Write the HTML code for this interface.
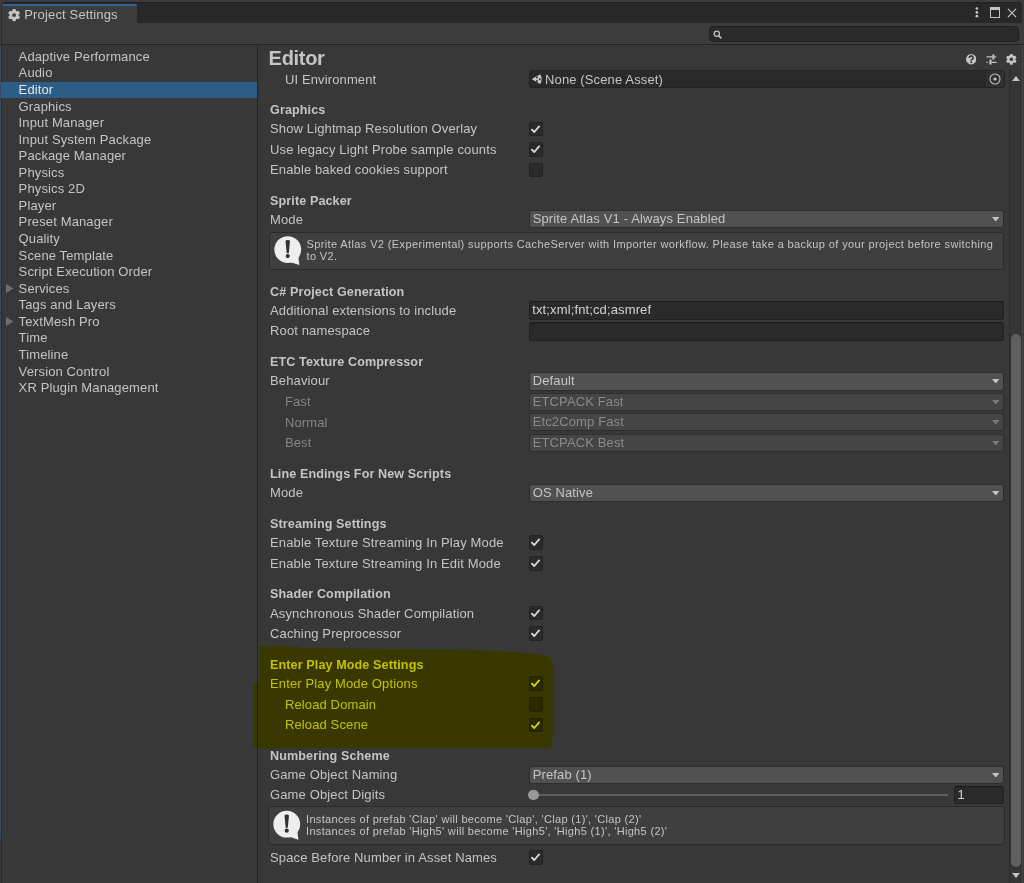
<!DOCTYPE html>
<html><head><meta charset="utf-8"><style>
html,body{margin:0;padding:0;}
body{width:1024px;height:883px;overflow:hidden;position:relative;background:#383838;font-family:"Liberation Sans", sans-serif;}
.t{position:absolute;white-space:nowrap;}
</style></head><body>
<div style="position:absolute;left:0px;top:0px;width:1024.00px;height:45.00px;background:#3b3b3b"></div><div style="position:absolute;left:1.2px;top:2px;width:1020.50px;height:20.70px;background:#282828;border-top:1px solid #1f1f1f;border-radius:5px 4px 0 0;box-sizing:border-box"></div><div style="position:absolute;left:1.5px;top:3.7px;width:135.00px;height:26.30px;background:#3c3c3c;border-radius:4px 3px 0 0"></div><div style="position:absolute;left:1.5px;top:3.7px;width:135.30px;height:2.70px;background:#2f6396;border-radius:4px 3px 0 0"></div><div style="position:absolute;left:1.2px;top:22.7px;width:1020.80px;height:21.30px;background:#3c3c3c"></div><div style="position:absolute;left:0.9px;top:5px;width:0.70px;height:40.00px;background:#2c2c2c"></div><div style="position:absolute;left:0px;top:44px;width:1024.00px;height:1.00px;background:#232323"></div><svg style="position:absolute;left:6.85px;top:7.90px" width="14.2" height="14.2" viewBox="0 0 14.2 14.2"><rect x="5.400" y="1.000" width="3.4" height="6.1" rx="1.020" transform="rotate(0 7.1 7.1)" fill="#c4c4c4"/><rect x="5.400" y="1.000" width="3.4" height="6.1" rx="1.020" transform="rotate(60 7.1 7.1)" fill="#c4c4c4"/><rect x="5.400" y="1.000" width="3.4" height="6.1" rx="1.020" transform="rotate(120 7.1 7.1)" fill="#c4c4c4"/><rect x="5.400" y="1.000" width="3.4" height="6.1" rx="1.020" transform="rotate(180 7.1 7.1)" fill="#c4c4c4"/><rect x="5.400" y="1.000" width="3.4" height="6.1" rx="1.020" transform="rotate(240 7.1 7.1)" fill="#c4c4c4"/><rect x="5.400" y="1.000" width="3.4" height="6.1" rx="1.020" transform="rotate(300 7.1 7.1)" fill="#c4c4c4"/><circle cx="7.1" cy="7.1" r="4.6" fill="#c4c4c4"/><circle cx="7.1" cy="7.1" r="1.95" fill="#3c3c3c"/></svg><div class="t" style="left:24.3px;top:6.83px;font-size:13px;line-height:16px;font-weight:normal;color:#c4c4c4;letter-spacing:0.15px;">Project Settings</div><svg style="position:absolute;left:974px;top:5px" width="6" height="15" viewBox="0 0 6 15"><circle cx="2.9" cy="3.5" r="1.35" fill="#c4c4c4"/><circle cx="2.9" cy="7.4" r="1.35" fill="#c4c4c4"/><circle cx="2.9" cy="11.2" r="1.35" fill="#c4c4c4"/></svg><div style="position:absolute;left:990px;top:7px;width:10.20px;height:10.70px;border:1px solid #c4c4c4;border-top:3px solid #c4c4c4;box-sizing:border-box"></div><svg style="position:absolute;left:1006.5px;top:7.5px" width="10" height="10" viewBox="0 0 10 10"><path d="M0.9 0.9L9.1 9.1M9.1 0.9L0.9 9.1" stroke="#c4c4c4" stroke-width="1.15"/></svg><div style="position:absolute;left:709.1px;top:25.5px;width:309.50px;height:16.20px;background:#2a2a2a;border:1px solid #202020;border-radius:4px;box-sizing:border-box"></div><svg style="position:absolute;left:713px;top:29.5px" width="10" height="10" viewBox="0 0 10 10"><circle cx="3.8" cy="3.8" r="2.6" fill="none" stroke="#c4c4c4" stroke-width="1.25"/><path d="M5.6 5.6L8.4 8.4" stroke="#c4c4c4" stroke-width="1.5"/></svg><div style="position:absolute;left:0px;top:45px;width:1.00px;height:794.00px;background:#3b4a5f"></div><div style="position:absolute;left:1px;top:45px;width:0.80px;height:838.00px;background:#2a2a2a"></div><div class="t" style="left:18.6px;top:48.83px;font-size:13px;line-height:16px;font-weight:normal;color:#c4c4c4;letter-spacing:0.13px;">Adaptive Performance</div><div class="t" style="left:18.6px;top:65.40px;font-size:13px;line-height:16px;font-weight:normal;color:#c4c4c4;letter-spacing:0.13px;">Audio</div><div style="position:absolute;left:1.2px;top:82px;width:256.30px;height:16.40px;background:#2c5d87"></div><div class="t" style="left:18.6px;top:81.96px;font-size:13px;line-height:16px;font-weight:normal;color:#e6e6e6;letter-spacing:0.13px;">Editor</div><div class="t" style="left:18.6px;top:98.53px;font-size:13px;line-height:16px;font-weight:normal;color:#c4c4c4;letter-spacing:0.13px;">Graphics</div><div class="t" style="left:18.6px;top:115.09px;font-size:13px;line-height:16px;font-weight:normal;color:#c4c4c4;letter-spacing:0.13px;">Input Manager</div><div class="t" style="left:18.6px;top:131.66px;font-size:13px;line-height:16px;font-weight:normal;color:#c4c4c4;letter-spacing:0.13px;">Input System Package</div><div class="t" style="left:18.6px;top:148.22px;font-size:13px;line-height:16px;font-weight:normal;color:#c4c4c4;letter-spacing:0.13px;">Package Manager</div><div class="t" style="left:18.6px;top:164.79px;font-size:13px;line-height:16px;font-weight:normal;color:#c4c4c4;letter-spacing:0.13px;">Physics</div><div class="t" style="left:18.6px;top:181.35px;font-size:13px;line-height:16px;font-weight:normal;color:#c4c4c4;letter-spacing:0.13px;">Physics 2D</div><div class="t" style="left:18.6px;top:197.92px;font-size:13px;line-height:16px;font-weight:normal;color:#c4c4c4;letter-spacing:0.13px;">Player</div><div class="t" style="left:18.6px;top:214.48px;font-size:13px;line-height:16px;font-weight:normal;color:#c4c4c4;letter-spacing:0.13px;">Preset Manager</div><div class="t" style="left:18.6px;top:231.05px;font-size:13px;line-height:16px;font-weight:normal;color:#c4c4c4;letter-spacing:0.13px;">Quality</div><div class="t" style="left:18.6px;top:247.61px;font-size:13px;line-height:16px;font-weight:normal;color:#c4c4c4;letter-spacing:0.13px;">Scene Template</div><div class="t" style="left:18.6px;top:264.18px;font-size:13px;line-height:16px;font-weight:normal;color:#c4c4c4;letter-spacing:0.13px;">Script Execution Order</div><svg style="position:absolute;left:5.8px;top:284.31px" width="8" height="9" viewBox="0 0 8 9"><path d="M0 0L7.5 4.5L0 9z" fill="#6e6e6e"/></svg><div class="t" style="left:18.6px;top:280.74px;font-size:13px;line-height:16px;font-weight:normal;color:#c4c4c4;letter-spacing:0.13px;">Services</div><div class="t" style="left:18.6px;top:297.31px;font-size:13px;line-height:16px;font-weight:normal;color:#c4c4c4;letter-spacing:0.13px;">Tags and Layers</div><svg style="position:absolute;left:5.8px;top:317.44px" width="8" height="9" viewBox="0 0 8 9"><path d="M0 0L7.5 4.5L0 9z" fill="#6e6e6e"/></svg><div class="t" style="left:18.6px;top:313.87px;font-size:13px;line-height:16px;font-weight:normal;color:#c4c4c4;letter-spacing:0.13px;">TextMesh Pro</div><div class="t" style="left:18.6px;top:330.44px;font-size:13px;line-height:16px;font-weight:normal;color:#c4c4c4;letter-spacing:0.13px;">Time</div><div class="t" style="left:18.6px;top:347.00px;font-size:13px;line-height:16px;font-weight:normal;color:#c4c4c4;letter-spacing:0.13px;">Timeline</div><div class="t" style="left:18.6px;top:363.57px;font-size:13px;line-height:16px;font-weight:normal;color:#c4c4c4;letter-spacing:0.13px;">Version Control</div><div class="t" style="left:18.6px;top:380.13px;font-size:13px;line-height:16px;font-weight:normal;color:#c4c4c4;letter-spacing:0.13px;">XR Plugin Management</div><div style="position:absolute;left:257.3px;top:45px;width:1.10px;height:838.00px;background:#232323"></div><div class="t" style="left:268.6px;top:45.96px;font-size:20px;line-height:24px;font-weight:bold;color:#c4c4c4;letter-spacing:-0.3px;">Editor</div><svg style="position:absolute;left:966px;top:54.4px" width="10.4" height="10.4" viewBox="0 0 10 10"><circle cx="5" cy="5" r="5" fill="#c4c4c4"/><path d="M3.2 3.8a1.8 1.8 0 1 1 2.7 1.4c-0.6 0.4-0.9 0.6-0.9 1.2" fill="none" stroke="#383838" stroke-width="1.6"/><circle cx="5" cy="7.95" r="0.95" fill="#383838"/></svg><svg style="position:absolute;left:985.5px;top:54px" width="11" height="11" viewBox="0 0 11 11"><path d="M0.5 2.8H6.3M8.5 2.8H10.2M0.5 8.3H1.9M5.6 8.3H10.5" stroke="#c4c4c4" stroke-width="1.3"/><rect x="6.3" y="0.5" width="2.2" height="4.9" rx="0.4" fill="#c4c4c4"/><rect x="3.4" y="5.6" width="2.2" height="5.0" rx="0.4" fill="#c4c4c4"/></svg><svg style="position:absolute;left:1004.50px;top:53.20px" width="12.7" height="12.7" viewBox="0 0 12.7 12.7"><rect x="4.850" y="1.000" width="3.0" height="5.35" rx="0.900" transform="rotate(0 6.35 6.35)" fill="#c4c4c4"/><rect x="4.850" y="1.000" width="3.0" height="5.35" rx="0.900" transform="rotate(60 6.35 6.35)" fill="#c4c4c4"/><rect x="4.850" y="1.000" width="3.0" height="5.35" rx="0.900" transform="rotate(120 6.35 6.35)" fill="#c4c4c4"/><rect x="4.850" y="1.000" width="3.0" height="5.35" rx="0.900" transform="rotate(180 6.35 6.35)" fill="#c4c4c4"/><rect x="4.850" y="1.000" width="3.0" height="5.35" rx="0.900" transform="rotate(240 6.35 6.35)" fill="#c4c4c4"/><rect x="4.850" y="1.000" width="3.0" height="5.35" rx="0.900" transform="rotate(300 6.35 6.35)" fill="#c4c4c4"/><circle cx="6.35" cy="6.35" r="4.0" fill="#c4c4c4"/><circle cx="6.35" cy="6.35" r="1.75" fill="#383838"/></svg><div class="t" style="left:284.9px;top:71.58px;font-size:13px;line-height:16px;font-weight:normal;color:#c4c4c4;letter-spacing:0.13px;">UI Environment</div><div style="position:absolute;left:528.7px;top:70px;width:476.10px;height:18.00px;background:#2a2a2a;border:1px solid #232323;border-radius:3px;box-sizing:border-box"></div><div style="position:absolute;left:986px;top:71px;width:17.80px;height:16.00px;background:#303030;border-radius:0 3px 3px 0"></div><svg style="position:absolute;left:532.4px;top:74.2px" width="10" height="10.4" viewBox="0 0 10 10.4"><path d="M0.3 5.2Q0.3 4.9 0.7 4.6L8.2 0.3Q9.6 2.6 9.6 5.2Q9.6 7.8 8.2 10.1L0.7 5.8Q0.3 5.5 0.3 5.2z" fill="#c8c8c8"/><circle cx="4.9" cy="3.4" r="0.95" fill="#2a2a2a"/><circle cx="4.9" cy="7.0" r="0.95" fill="#2a2a2a"/><circle cx="7.7" cy="5.2" r="0.95" fill="#2a2a2a"/></svg><div class="t" style="left:545px;top:71.53px;font-size:13px;line-height:16px;font-weight:normal;color:#c4c4c4;letter-spacing:0.13px;">None (Scene Asset)</div><svg style="position:absolute;left:989.3px;top:73px" width="12" height="12" viewBox="0 0 12 12"><circle cx="6" cy="6" r="5" fill="none" stroke="#c4c4c4" stroke-width="1.1"/><circle cx="6" cy="6" r="1.6" fill="#c4c4c4"/></svg><div class="t" style="left:270px;top:102.08px;font-size:12.6px;line-height:16px;font-weight:bold;color:#c4c4c4;letter-spacing:0.1px;">Graphics</div><div class="t" style="left:270px;top:192.68px;font-size:12.6px;line-height:16px;font-weight:bold;color:#c4c4c4;letter-spacing:0.1px;">Sprite Packer</div><div class="t" style="left:270px;top:283.63px;font-size:12.6px;line-height:16px;font-weight:bold;color:#c4c4c4;letter-spacing:0.1px;">C# Project Generation</div><div class="t" style="left:270px;top:354.38px;font-size:12.6px;line-height:16px;font-weight:bold;color:#c4c4c4;letter-spacing:0.1px;">ETC Texture Compressor</div><div class="t" style="left:270px;top:466.13px;font-size:12.6px;line-height:16px;font-weight:bold;color:#c4c4c4;letter-spacing:0.1px;">Line Endings For New Scripts</div><div class="t" style="left:270px;top:515.98px;font-size:12.6px;line-height:16px;font-weight:bold;color:#c4c4c4;letter-spacing:0.1px;">Streaming Settings</div><div class="t" style="left:270px;top:586.48px;font-size:12.6px;line-height:16px;font-weight:bold;color:#c4c4c4;letter-spacing:0.1px;">Shader Compilation</div><div class="t" style="left:270px;top:748.08px;font-size:12.6px;line-height:16px;font-weight:bold;color:#c4c4c4;letter-spacing:0.1px;">Numbering Scheme</div><div class="t" style="left:270px;top:121.18px;font-size:13px;line-height:16px;font-weight:normal;color:#c4c4c4;letter-spacing:0.13px;">Show Lightmap Resolution Overlay</div><div class="t" style="left:270px;top:141.68px;font-size:13px;line-height:16px;font-weight:normal;color:#c4c4c4;letter-spacing:0.13px;">Use legacy Light Probe sample counts</div><div class="t" style="left:270px;top:162.18px;font-size:13px;line-height:16px;font-weight:normal;color:#c4c4c4;letter-spacing:0.13px;">Enable baked cookies support</div><div class="t" style="left:270px;top:211.78px;font-size:13px;line-height:16px;font-weight:normal;color:#c4c4c4;letter-spacing:0.13px;">Mode</div><div class="t" style="left:270px;top:302.73px;font-size:13px;line-height:16px;font-weight:normal;color:#c4c4c4;letter-spacing:0.13px;">Additional extensions to include</div><div class="t" style="left:270px;top:323.48px;font-size:13px;line-height:16px;font-weight:normal;color:#c4c4c4;letter-spacing:0.13px;">Root namespace</div><div class="t" style="left:270px;top:373.48px;font-size:13px;line-height:16px;font-weight:normal;color:#c4c4c4;letter-spacing:0.13px;">Behaviour</div><div class="t" style="left:270px;top:485.23px;font-size:13px;line-height:16px;font-weight:normal;color:#c4c4c4;letter-spacing:0.13px;">Mode</div><div class="t" style="left:270px;top:535.08px;font-size:13px;line-height:16px;font-weight:normal;color:#c4c4c4;letter-spacing:0.13px;">Enable Texture Streaming In Play Mode</div><div class="t" style="left:270px;top:555.98px;font-size:13px;line-height:16px;font-weight:normal;color:#c4c4c4;letter-spacing:0.13px;">Enable Texture Streaming In Edit Mode</div><div class="t" style="left:270px;top:605.58px;font-size:13px;line-height:16px;font-weight:normal;color:#c4c4c4;letter-spacing:0.13px;">Asynchronous Shader Compilation</div><div class="t" style="left:270px;top:625.93px;font-size:13px;line-height:16px;font-weight:normal;color:#c4c4c4;letter-spacing:0.13px;">Caching Preprocessor</div><div class="t" style="left:270px;top:767.18px;font-size:13px;line-height:16px;font-weight:normal;color:#c4c4c4;letter-spacing:0.13px;">Game Object Naming</div><div class="t" style="left:270px;top:787.08px;font-size:13px;line-height:16px;font-weight:normal;color:#c4c4c4;letter-spacing:0.13px;">Game Object Digits</div><div class="t" style="left:270px;top:849.83px;font-size:13px;line-height:16px;font-weight:normal;color:#c4c4c4;letter-spacing:0.13px;">Space Before Number in Asset Names</div><div class="t" style="left:284.9px;top:394.18px;font-size:13px;line-height:16px;font-weight:normal;color:#858585;letter-spacing:0.13px;">Fast</div><div class="t" style="left:284.9px;top:414.53px;font-size:13px;line-height:16px;font-weight:normal;color:#858585;letter-spacing:0.13px;">Normal</div><div class="t" style="left:284.9px;top:435.43px;font-size:13px;line-height:16px;font-weight:normal;color:#858585;letter-spacing:0.13px;">Best</div><div style="position:absolute;left:528.7px;top:121.5px;width:14.00px;height:14.70px;background:#2a2a2a;border:1px solid #222;border-radius:2px;box-sizing:border-box"></div><svg style="position:absolute;left:531.2px;top:124.50px" width="9" height="9" viewBox="0 0 9 9"><path d="M0.9 4.6L3.3 7L8.1 1.4" fill="none" stroke="#d8d8d8" stroke-width="1.8" stroke-linecap="round" stroke-linejoin="round"/></svg><div style="position:absolute;left:528.7px;top:142px;width:14.00px;height:14.70px;background:#2a2a2a;border:1px solid #222;border-radius:2px;box-sizing:border-box"></div><svg style="position:absolute;left:531.2px;top:145.00px" width="9" height="9" viewBox="0 0 9 9"><path d="M0.9 4.6L3.3 7L8.1 1.4" fill="none" stroke="#d8d8d8" stroke-width="1.8" stroke-linecap="round" stroke-linejoin="round"/></svg><div style="position:absolute;left:528.7px;top:162.5px;width:14.00px;height:14.70px;background:#2a2a2a;border:1px solid #222;border-radius:2px;box-sizing:border-box"></div><div style="position:absolute;left:528.7px;top:535.4px;width:14.00px;height:14.70px;background:#2a2a2a;border:1px solid #222;border-radius:2px;box-sizing:border-box"></div><svg style="position:absolute;left:531.2px;top:538.40px" width="9" height="9" viewBox="0 0 9 9"><path d="M0.9 4.6L3.3 7L8.1 1.4" fill="none" stroke="#d8d8d8" stroke-width="1.8" stroke-linecap="round" stroke-linejoin="round"/></svg><div style="position:absolute;left:528.7px;top:556.2px;width:14.00px;height:14.70px;background:#2a2a2a;border:1px solid #222;border-radius:2px;box-sizing:border-box"></div><svg style="position:absolute;left:531.2px;top:559.20px" width="9" height="9" viewBox="0 0 9 9"><path d="M0.9 4.6L3.3 7L8.1 1.4" fill="none" stroke="#d8d8d8" stroke-width="1.8" stroke-linecap="round" stroke-linejoin="round"/></svg><div style="position:absolute;left:528.7px;top:605.8px;width:14.00px;height:14.70px;background:#2a2a2a;border:1px solid #222;border-radius:2px;box-sizing:border-box"></div><svg style="position:absolute;left:531.2px;top:608.80px" width="9" height="9" viewBox="0 0 9 9"><path d="M0.9 4.6L3.3 7L8.1 1.4" fill="none" stroke="#d8d8d8" stroke-width="1.8" stroke-linecap="round" stroke-linejoin="round"/></svg><div style="position:absolute;left:528.7px;top:626.2px;width:14.00px;height:14.70px;background:#2a2a2a;border:1px solid #222;border-radius:2px;box-sizing:border-box"></div><svg style="position:absolute;left:531.2px;top:629.20px" width="9" height="9" viewBox="0 0 9 9"><path d="M0.9 4.6L3.3 7L8.1 1.4" fill="none" stroke="#d8d8d8" stroke-width="1.8" stroke-linecap="round" stroke-linejoin="round"/></svg><div style="position:absolute;left:528.7px;top:850.2px;width:14.00px;height:14.70px;background:#2a2a2a;border:1px solid #222;border-radius:2px;box-sizing:border-box"></div><svg style="position:absolute;left:531.2px;top:853.20px" width="9" height="9" viewBox="0 0 9 9"><path d="M0.9 4.6L3.3 7L8.1 1.4" fill="none" stroke="#d8d8d8" stroke-width="1.8" stroke-linecap="round" stroke-linejoin="round"/></svg><div style="position:absolute;left:529.3000000000001px;top:210px;width:475.00px;height:18.00px;background:#515151;border:1px solid #2e2e2e;border-top-color:#303030;border-radius:3px;box-sizing:border-box"></div><div class="t" style="left:532.7px;top:211.48px;font-size:13px;line-height:16px;font-weight:normal;color:#c4c4c4;letter-spacing:0.13px;">Sprite Atlas V1 - Always Enabled</div><svg style="position:absolute;left:991.7px;top:217.15px" width="7.4" height="4.6" viewBox="0 0 8 5"><path d="M0 0H8L4 5z" fill="#c4c4c4"/></svg><div style="position:absolute;left:529.3000000000001px;top:372px;width:475.00px;height:19.00px;background:#515151;border:1px solid #2e2e2e;border-top-color:#303030;border-radius:3px;box-sizing:border-box"></div><div class="t" style="left:532.7px;top:373.18px;font-size:13px;line-height:16px;font-weight:normal;color:#c4c4c4;letter-spacing:0.13px;">Default</div><svg style="position:absolute;left:991.7px;top:378.85px" width="7.4" height="4.6" viewBox="0 0 8 5"><path d="M0 0H8L4 5z" fill="#c4c4c4"/></svg><div style="position:absolute;left:529.3000000000001px;top:393px;width:475.00px;height:18.00px;background:#454545;border:1px solid #2e2e2e;border-top-color:#303030;border-radius:3px;box-sizing:border-box"></div><div class="t" style="left:532.7px;top:393.88px;font-size:13px;line-height:16px;font-weight:normal;color:#8a8a8a;letter-spacing:0.13px;">ETCPACK Fast</div><svg style="position:absolute;left:991.7px;top:399.55px" width="7.4" height="4.6" viewBox="0 0 8 5"><path d="M0 0H8L4 5z" fill="#7a7a7a"/></svg><div style="position:absolute;left:529.3000000000001px;top:413px;width:475.00px;height:18.00px;background:#454545;border:1px solid #2e2e2e;border-top-color:#303030;border-radius:3px;box-sizing:border-box"></div><div class="t" style="left:532.7px;top:414.23px;font-size:13px;line-height:16px;font-weight:normal;color:#8a8a8a;letter-spacing:0.13px;">Etc2Comp Fast</div><svg style="position:absolute;left:991.7px;top:419.90px" width="7.4" height="4.6" viewBox="0 0 8 5"><path d="M0 0H8L4 5z" fill="#7a7a7a"/></svg><div style="position:absolute;left:529.3000000000001px;top:434px;width:475.00px;height:18.00px;background:#454545;border:1px solid #2e2e2e;border-top-color:#303030;border-radius:3px;box-sizing:border-box"></div><div class="t" style="left:532.7px;top:435.13px;font-size:13px;line-height:16px;font-weight:normal;color:#8a8a8a;letter-spacing:0.13px;">ETCPACK Best</div><svg style="position:absolute;left:991.7px;top:440.80px" width="7.4" height="4.6" viewBox="0 0 8 5"><path d="M0 0H8L4 5z" fill="#7a7a7a"/></svg><div style="position:absolute;left:529.3000000000001px;top:484px;width:475.00px;height:18.00px;background:#515151;border:1px solid #2e2e2e;border-top-color:#303030;border-radius:3px;box-sizing:border-box"></div><div class="t" style="left:532.7px;top:484.93px;font-size:13px;line-height:16px;font-weight:normal;color:#c4c4c4;letter-spacing:0.13px;">OS Native</div><svg style="position:absolute;left:991.7px;top:490.60px" width="7.4" height="4.6" viewBox="0 0 8 5"><path d="M0 0H8L4 5z" fill="#c4c4c4"/></svg><div style="position:absolute;left:529.3000000000001px;top:766px;width:475.00px;height:18.00px;background:#515151;border:1px solid #2e2e2e;border-top-color:#303030;border-radius:3px;box-sizing:border-box"></div><div class="t" style="left:532.7px;top:766.88px;font-size:13px;line-height:16px;font-weight:normal;color:#c4c4c4;letter-spacing:0.13px;">Prefab (1)</div><svg style="position:absolute;left:991.7px;top:772.55px" width="7.4" height="4.6" viewBox="0 0 8 5"><path d="M0 0H8L4 5z" fill="#c4c4c4"/></svg><div style="position:absolute;left:528.7px;top:301px;width:475.60px;height:18.80px;background:#2a2a2a;border:1px solid #212121;border-top-color:#1a1a1a;border-radius:3px;box-sizing:border-box"></div><div class="t" style="left:532.2px;top:302.43px;font-size:13px;line-height:16px;font-weight:normal;color:#d2d2d2;letter-spacing:0.13px;">txt;xml;fnt;cd;asmref</div><div style="position:absolute;left:528.7px;top:321.8px;width:475.60px;height:19.20px;background:#2a2a2a;border:1px solid #212121;border-top-color:#1a1a1a;border-radius:3px;box-sizing:border-box"></div><div style="position:absolute;left:268.9px;top:231.9px;width:735.30px;height:38.10px;background:#3f3f3f;border:1px solid #2a2a2a;border-radius:3px;box-sizing:border-box"></div><svg style="position:absolute;left:268.90px;top:231.90px" width="36" height="38" viewBox="0 0 36 38"><circle cx="18.75" cy="17.60" r="13.4" fill="#eeeeee"/><path d="M21.5 30.30L30.4 33.10L29.4 25.30z" fill="#eeeeee"/><path d="M16.55 9.20Q16.6 8.00 18.75 8.00Q20.9 8.00 20.95 9.20L19.8 21.20L17.7 21.20z" fill="#303030"/><circle cx="18.75" cy="24.10" r="2.05" fill="#303030"/></svg><div class="t" style="left:306.5px;top:238.20px;font-size:11px;line-height:13px;font-weight:normal;color:#c4c4c4;letter-spacing:0.38px;">Sprite Atlas V2 (Experimental) supports CacheServer with Importer workflow. Please take a backup of your project before switching</div><div class="t" style="left:306.5px;top:250.30px;font-size:11px;line-height:13px;font-weight:normal;color:#c4c4c4;letter-spacing:0.38px;">to V2.</div><div style="position:absolute;left:268.4px;top:806px;width:736.20px;height:39.20px;background:#3f3f3f;border:1px solid #2a2a2a;border-radius:3px;box-sizing:border-box"></div><svg style="position:absolute;left:268.40px;top:806.00px" width="36" height="38" viewBox="0 0 36 38"><circle cx="18.75" cy="18.15" r="13.4" fill="#eeeeee"/><path d="M21.5 30.85L30.4 33.65L29.4 25.85z" fill="#eeeeee"/><path d="M16.55 9.75Q16.6 8.55 18.75 8.55Q20.9 8.55 20.95 9.75L19.8 21.75L17.7 21.75z" fill="#303030"/><circle cx="18.75" cy="24.65" r="2.05" fill="#303030"/></svg><div class="t" style="left:306.0px;top:812.85px;font-size:11px;line-height:13px;font-weight:normal;color:#c4c4c4;letter-spacing:0.33px;">Instances of prefab 'Clap' will become 'Clap', 'Clap (1)', 'Clap (2)'</div><div class="t" style="left:306.0px;top:824.95px;font-size:11px;line-height:13px;font-weight:normal;color:#c4c4c4;letter-spacing:0.33px;">Instances of prefab 'High5' will become 'High5', 'High5 (1)', 'High5 (2)'</div><div style="position:absolute;left:538px;top:793.9px;width:410.00px;height:2.10px;background:#5e5e5e"></div><div style="position:absolute;left:528.2px;top:789.5px;width:10.60px;height:10.80px;background:#999999;border-radius:50%"></div><div style="position:absolute;left:954px;top:785.5px;width:50.40px;height:18.50px;background:#2a2a2a;border:1px solid #212121;border-top-color:#1a1a1a;border-radius:3px;box-sizing:border-box"></div><div class="t" style="left:957.5px;top:786.78px;font-size:13px;line-height:16px;font-weight:normal;color:#d2d2d2;letter-spacing:0.13px;">1</div><div class="t" style="left:270px;top:656.73px;font-size:12.6px;line-height:16px;font-weight:bold;color:#c4c4c4;letter-spacing:0.1px;">Enter Play Mode Settings</div><div class="t" style="left:270px;top:675.83px;font-size:13px;line-height:16px;font-weight:normal;color:#c4c4c4;letter-spacing:0.13px;">Enter Play Mode Options</div><div class="t" style="left:284.9px;top:696.58px;font-size:13px;line-height:16px;font-weight:normal;color:#c4c4c4;letter-spacing:0.13px;">Reload Domain</div><div class="t" style="left:284.9px;top:717.08px;font-size:13px;line-height:16px;font-weight:normal;color:#c4c4c4;letter-spacing:0.13px;">Reload Scene</div><div style="position:absolute;left:528.7px;top:676px;width:14.00px;height:14.70px;background:#2a2a2a;border:1px solid #222;border-radius:2px;box-sizing:border-box"></div><svg style="position:absolute;left:531.2px;top:679.00px" width="9" height="9" viewBox="0 0 9 9"><path d="M0.9 4.6L3.3 7L8.1 1.4" fill="none" stroke="#d8d8d8" stroke-width="1.8" stroke-linecap="round" stroke-linejoin="round"/></svg><div style="position:absolute;left:528.7px;top:697px;width:14.00px;height:14.70px;background:#2a2a2a;border:1px solid #222;border-radius:2px;box-sizing:border-box"></div><div style="position:absolute;left:528.7px;top:717.5px;width:14.00px;height:14.70px;background:#2a2a2a;border:1px solid #222;border-radius:2px;box-sizing:border-box"></div><svg style="position:absolute;left:531.2px;top:720.50px" width="9" height="9" viewBox="0 0 9 9"><path d="M0.9 4.6L3.3 7L8.1 1.4" fill="none" stroke="#d8d8d8" stroke-width="1.8" stroke-linecap="round" stroke-linejoin="round"/></svg><div style="position:absolute;left:1009.4px;top:69.5px;width:12.60px;height:813.50px;background:#353535;border-left:1px solid #2c2c2c;box-sizing:border-box"></div><svg style="position:absolute;left:1012px;top:76.2px" width="8" height="5" viewBox="0 0 8 5"><path d="M0 5H8L4 0z" fill="#c4c4c4"/></svg><div style="position:absolute;left:1010.9px;top:334.3px;width:10.10px;height:532.50px;background:#5f5f5f;border-radius:5px"></div><svg style="position:absolute;left:1012px;top:872.7px" width="8" height="5" viewBox="0 0 8 5"><path d="M0 0H8L4 5z" fill="#c4c4c4"/></svg><div style="position:absolute;left:1022px;top:45px;width:1.00px;height:838.00px;background:#474747"></div><div style="position:absolute;left:1023px;top:45px;width:1.00px;height:838.00px;background:#3a3a3a"></div><svg style="position:absolute;left:0;top:0;mix-blend-mode:multiply" width="1024" height="883"><path d="M259.5 646 L 298 646.2 L 301 648 L 460 649.7 L 500 651 L 538 654 Q 552.8 655 552.8 664 L 552.8 737 L 551.5 745 Q 551 748.3 546 748.4 L 400 748.5 L 253 748.5 L 253 682.5 L 259.5 682.5 Z" fill="#fffd00"/></svg>
</body></html>
